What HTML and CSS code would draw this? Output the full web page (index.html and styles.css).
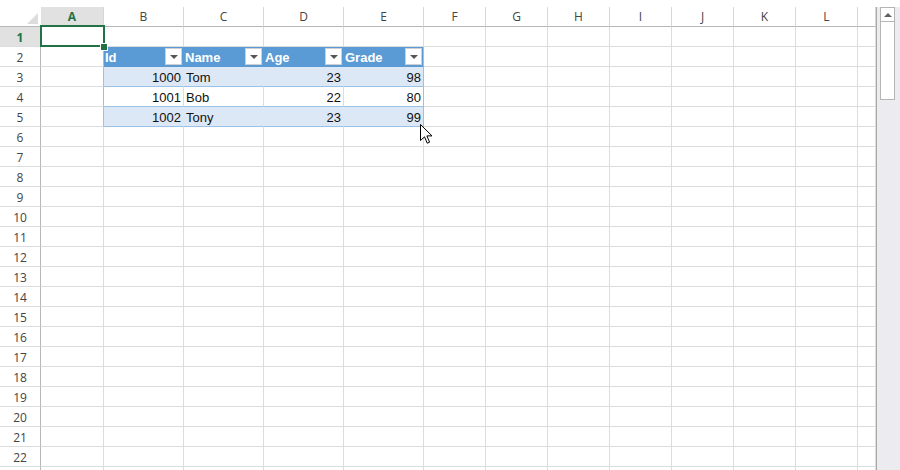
FILE: index.html
```html
<!DOCTYPE html>
<html>
<head>
<meta charset="utf-8">
<link rel="stylesheet" href="styles.css">
</head>
<body>
<div class="app">
  <div class="sheet">
    <div class="row hdr">
      <span class="corner"><span class="tri"></span></span>
      <span class="ch on">A</span><span class="ch">B</span><span class="ch">C</span><span class="ch">D</span><span class="ch">E</span><span class="ch">F</span><span class="ch">G</span><span class="ch">H</span><span class="ch">I</span><span class="ch">J</span><span class="ch">K</span><span class="ch">L</span><span class="ch"></span>
    </div>
    <div class="row">
      <span class="rh on">1</span><span class="cell a1"><span class="selbox"></span><span class="handle"></span></span><i></i><i></i><i></i><i></i><i></i><i></i><i></i><i></i><i></i><i></i><i></i><i></i>
    </div>
    <div class="row">
      <span class="rh">2</span><i class="tedge"></i>
      <span class="th"><span class="tt">Id</span><span class="fb"></span></span>
      <span class="th"><span class="tt">Name</span><span class="fb"></span></span>
      <span class="th"><span class="tt">Age</span><span class="fb"></span></span>
      <span class="th last"><span class="tt">Grade</span><span class="fb"></span></span>
      <i></i><i></i><i></i><i></i><i></i><i></i><i></i><i></i>
    </div>
    <div class="row">
      <span class="rh">3</span><i class="tedge"></i>
      <span class="td band num">1000</span><span class="td band">Tom</span><span class="td band num">23</span><span class="td band num last">98</span>
      <i></i><i></i><i></i><i></i><i></i><i></i><i></i><i></i>
    </div>
    <div class="row">
      <span class="rh">4</span><i class="tedge"></i>
      <span class="td num">1001</span><span class="td">Bob</span><span class="td num">22</span><span class="td num last">80</span>
      <i></i><i></i><i></i><i></i><i></i><i></i><i></i><i></i>
    </div>
    <div class="row">
      <span class="rh">5</span><i class="tedge"></i>
      <span class="td band num">1002</span><span class="td band">Tony</span><span class="td band num">23</span><span class="td band num last">99</span>
      <i></i><i></i><i></i><i></i><i></i><i></i><i></i><i></i>
    </div>
    <div class="row"><span class="rh">6</span><i></i><i></i><i></i><i></i><i></i><i></i><i></i><i></i><i></i><i></i><i></i><i></i><i></i></div>
    <div class="row"><span class="rh">7</span><i></i><i></i><i></i><i></i><i></i><i></i><i></i><i></i><i></i><i></i><i></i><i></i><i></i></div>
    <div class="row"><span class="rh">8</span><i></i><i></i><i></i><i></i><i></i><i></i><i></i><i></i><i></i><i></i><i></i><i></i><i></i></div>
    <div class="row"><span class="rh">9</span><i></i><i></i><i></i><i></i><i></i><i></i><i></i><i></i><i></i><i></i><i></i><i></i><i></i></div>
    <div class="row"><span class="rh">10</span><i></i><i></i><i></i><i></i><i></i><i></i><i></i><i></i><i></i><i></i><i></i><i></i><i></i></div>
    <div class="row"><span class="rh">11</span><i></i><i></i><i></i><i></i><i></i><i></i><i></i><i></i><i></i><i></i><i></i><i></i><i></i></div>
    <div class="row"><span class="rh">12</span><i></i><i></i><i></i><i></i><i></i><i></i><i></i><i></i><i></i><i></i><i></i><i></i><i></i></div>
    <div class="row"><span class="rh">13</span><i></i><i></i><i></i><i></i><i></i><i></i><i></i><i></i><i></i><i></i><i></i><i></i><i></i></div>
    <div class="row"><span class="rh">14</span><i></i><i></i><i></i><i></i><i></i><i></i><i></i><i></i><i></i><i></i><i></i><i></i><i></i></div>
    <div class="row"><span class="rh">15</span><i></i><i></i><i></i><i></i><i></i><i></i><i></i><i></i><i></i><i></i><i></i><i></i><i></i></div>
    <div class="row"><span class="rh">16</span><i></i><i></i><i></i><i></i><i></i><i></i><i></i><i></i><i></i><i></i><i></i><i></i><i></i></div>
    <div class="row"><span class="rh">17</span><i></i><i></i><i></i><i></i><i></i><i></i><i></i><i></i><i></i><i></i><i></i><i></i><i></i></div>
    <div class="row"><span class="rh">18</span><i></i><i></i><i></i><i></i><i></i><i></i><i></i><i></i><i></i><i></i><i></i><i></i><i></i></div>
    <div class="row"><span class="rh">19</span><i></i><i></i><i></i><i></i><i></i><i></i><i></i><i></i><i></i><i></i><i></i><i></i><i></i></div>
    <div class="row"><span class="rh">20</span><i></i><i></i><i></i><i></i><i></i><i></i><i></i><i></i><i></i><i></i><i></i><i></i><i></i></div>
    <div class="row"><span class="rh">21</span><i></i><i></i><i></i><i></i><i></i><i></i><i></i><i></i><i></i><i></i><i></i><i></i><i></i></div>
    <div class="row"><span class="rh">22</span><i></i><i></i><i></i><i></i><i></i><i></i><i></i><i></i><i></i><i></i><i></i><i></i><i></i></div>
    <div class="row"><span class="rh"></span><i></i><i></i><i></i><i></i><i></i><i></i><i></i><i></i><i></i><i></i><i></i><i></i><i></i></div>
  </div>
  <div class="vscroll">
    <div class="sbtn"><span class="up"></span></div>
    <div class="thumb"></div>
  </div>
</div>
<svg class="cursor" width="14" height="22" viewBox="0 0 14 22">
  <path d="M0.5 0.5 L0.5 16.5 L4.5 12.8 L7.2 19.2 L9.6 18.2 L6.9 11.9 L12 11.9 Z" fill="#fff" stroke="#000" stroke-width="1" stroke-linejoin="miter"/>
</svg>
</body>
</html>
```

FILE: styles.css
```css
html, body {
  margin: 0;
  padding: 0;
  background: #ffffff;
  overflow: hidden;
}
body {
  width: 900px;
  height: 470px;
  position: relative;
  font-family: "Liberation Sans", Arial, sans-serif;
}
.app {
  display: flex;
  height: 470px;
  padding-top: 7px;
  box-sizing: border-box;
}
.sheet {
  width: 876px;
  flex: none;
  overflow: hidden;
  background: #fff;
}
.row {
  display: grid;
  grid-template-columns: 41px 63px repeat(4, 80px) repeat(7, 62px) 1fr;
  height: 20px;
}
.row > * {
  display: block;
  box-sizing: border-box;
  border-right: 1px solid #dadcdd;
  border-bottom: 1px solid #dadcdd;
  min-width: 0;
  font-style: normal;
}
.hdr > * {
  border-bottom: 1px solid #b7b7b7;
  border-right-color: #d6d6d6;
  font-family: "Open Sans", "Noto Sans", sans-serif;
  font-size: 12px;
  color: #444;
  display: flex;
  align-items: center;
  justify-content: center;
}
.corner {
  position: relative;
  border-right-color: #fff !important;
}
.tri {
  position: absolute;
  right: 2px;
  bottom: 2px;
  width: 0;
  height: 0;
  border-left: 11px solid transparent;
  border-bottom: 11px solid #dcdcdc;
}
.ch.on {
  background: #e1e1e1;
  color: #217346;
  font-weight: 700;
}
.rh {
  border-right-color: #b7b7b7 !important;
  font-family: "Open Sans", "Noto Sans", sans-serif;
  font-size: 12px;
  color: #444;
  display: flex !important;
  align-items: center;
  justify-content: center;
  padding-top: 1px;
}
.rh.on {
  background: #e1e1e1;
  color: #217346;
  font-weight: 700;
}
.a1 {
  position: relative;
}
.selbox {
  position: absolute;
  left: -1px;
  top: -2px;
  width: 65px;
  height: 22px;
  box-sizing: border-box;
  border: 2px solid #217346;
}
.handle {
  position: absolute;
  left: 59px;
  top: 16px;
  width: 6px;
  height: 6px;
  background: #217346;
  border: 1px solid #fff;
}
.tedge {
  border-right-color: #9bc2e6 !important;
}
.th {
  background: #5b9bd5;
  border-right-color: #5b9bd5 !important;
  border-bottom-color: #5b9bd5 !important;
  display: flex !important;
  align-items: center;
  justify-content: space-between;
  color: #fff;
  font-weight: 700;
  font-size: 13px;
  padding-left: 1px;
}
.th.last {
  border-right-color: #9bc2e6 !important;
}
.tt {
  line-height: 1;
  padding-top: 1px;
}
.fb {
  width: 17px;
  height: 17px;
  box-sizing: border-box;
  background: #fff;
  border: 1px solid #d0d0d0;
  margin-right: 1px;
  display: flex;
  align-items: center;
  justify-content: center;
}
.fb::after {
  content: "";
  width: 0;
  height: 0;
  border-left: 4px solid transparent;
  border-right: 4px solid transparent;
  border-top: 4px solid #555;
}
.td {
  font-size: 13px;
  color: #111;
  display: flex !important;
  align-items: center;
  padding: 1px 2px 0 2px;
  border-bottom-color: #9bc2e6 !important;
  background: #fff;
}
.td.band {
  background: #dde8f7;
  border-right-color: #dde8f7;
}
.td.num {
  justify-content: flex-end;
}
.td.last {
  border-right-color: #9bc2e6 !important;
}
.vscroll {
  width: 24px;
  flex: none;
  box-sizing: border-box;
  border-left: 1px solid #a9a9a9;
  background: #ecebef;
  padding: 0 5px 0 3px;
}
.sbtn {
  height: 15px;
  box-sizing: border-box;
  background: #fff;
  border: 1px solid #b5b5b5;
  display: flex;
  align-items: center;
  justify-content: center;
}
.up {
  width: 0;
  height: 0;
  border-left: 4px solid transparent;
  border-right: 4px solid transparent;
  border-bottom: 4px solid #606060;
}
.thumb {
  height: 79px;
  margin-top: -1px;
  box-sizing: border-box;
  background: #fff;
  border: 1px solid #b5b5b5;
}
.cursor {
  position: absolute;
  left: 420px;
  top: 124px;
}
```
